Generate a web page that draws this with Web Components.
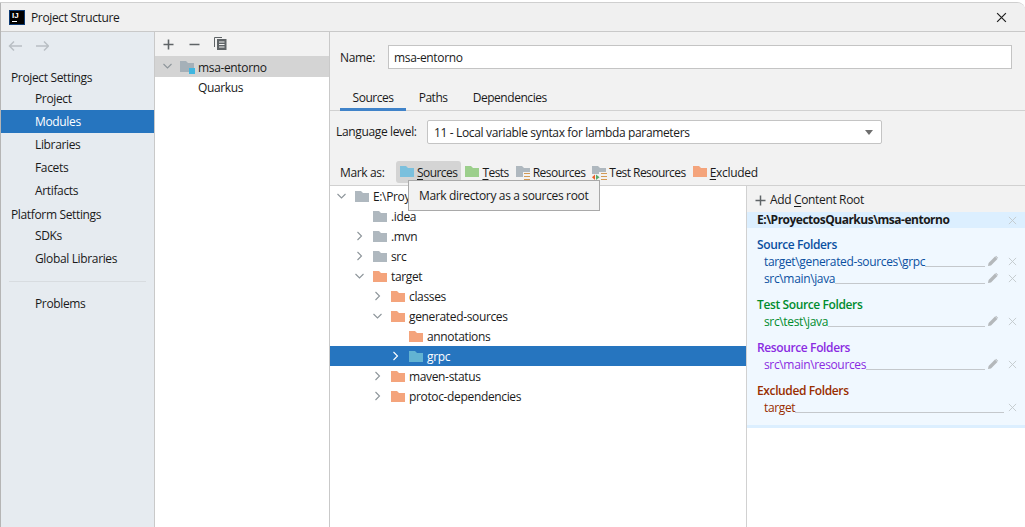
<!DOCTYPE html>
<html>
<head>
<meta charset="utf-8">
<title>Project Structure</title>
<style>
  html, body { margin: 0; height: 100%; background: #fff; overflow: hidden; }
  body { font: 12px/16px "Open Sans", "Noto Sans", sans-serif; color: #1a1a1a; letter-spacing: -.35px; }
</style>
</head>
<body>
<project-window>
  <window-titlebar slot="title">Project Structure</window-titlebar>
  <settings-nav slot="nav"></settings-nav>
  <module-list slot="modules"></module-list>
  <module-editor slot="editor">
    <folder-tree slot="tree">
      <tree-row depth="0" arrow="down" color="#afb8bf">E:\Proy</tree-row>
      <tree-row depth="1" color="#afb8bf">.idea</tree-row>
      <tree-row depth="1" arrow="right" color="#afb8bf">.mvn</tree-row>
      <tree-row depth="1" arrow="right" color="#afb8bf">src</tree-row>
      <tree-row depth="1" arrow="down" color="#f4a47c">target</tree-row>
      <tree-row depth="2" arrow="right" color="#f4a47c">classes</tree-row>
      <tree-row depth="2" arrow="down" color="#f4a47c">generated-sources</tree-row>
      <tree-row depth="3" color="#f4a47c">annotations</tree-row>
      <tree-row depth="3" arrow="right" color="#62b3d2" selected>grpc</tree-row>
      <tree-row depth="2" arrow="right" color="#f4a47c">maven-status</tree-row>
      <tree-row depth="2" arrow="right" color="#f4a47c">protoc-dependencies</tree-row>
    </folder-tree>
    <content-roots slot="roots">
      <root-group label="Source Folders" color="#0a50a1">
        <root-entry editable>target\generated-sources\grpc</root-entry>
        <root-entry editable>src\main\java</root-entry>
      </root-group>
      <root-group label="Test Source Folders" color="#008c2e">
        <root-entry editable>src\test\java</root-entry>
      </root-group>
      <root-group label="Resource Folders" color="#8a2be2">
        <root-entry editable>src\main\resources</root-entry>
      </root-group>
      <root-group label="Excluded Folders" color="#992e00">
        <root-entry>target</root-entry>
      </root-group>
    </content-roots>
  </module-editor>
</project-window>

<script>
  const xIcon = (size, color, width) => `
    <svg width="${size}" height="${size}" viewBox="0 0 10 10" style="display:block;flex:none">
      <path d="M1 1l8 8M9 1l-8 8" stroke="${color}" stroke-width="${width}" fill="none"/>
    </svg>`;

  const folderPath = 'M0 1h6l2 2h6v9H0z';

  class ProjectWindow extends HTMLElement {
    connectedCallback () {
      this.attachShadow({mode: 'open'}).innerHTML = `
        <style>
          :host {
            display: grid;
            grid-template-columns: 154px 175px 1fr;
            grid-template-rows: 29px 1fr;
            position: absolute;
            inset: 2px 0 0 0;
            box-sizing: border-box;
            border-left: 1px solid #b5b5b5;
            border-top: 1px solid #cfcfcf;
            border-top-right-radius: 8px;
            background: #f2f2f2;
            overflow: hidden;
          }
          ::slotted([slot=title]) { grid-column: 1 / 4; }
        </style>
        <slot name="title"></slot>
        <slot name="nav"></slot>
        <slot name="modules"></slot>
        <slot name="editor"></slot>
      `;
    }
  }

  class WindowTitlebar extends HTMLElement {
    connectedCallback () {
      this.attachShadow({mode: 'open'}).innerHTML = `
        <style>
          :host {
            display: flex;
            align-items: center;
            background: #f0f0f0;
            border-bottom: 1px solid #c9c9c9;
            padding: 0 18px 0 8px;
          }
          .logo {
            width: 16px; height: 15px;
            margin: 1px 6px 0 0;
            background: #000;
            color: #fff;
            box-sizing: border-box;
            padding: 2px 0 0 3px;
            font: bold 8px/8px "Liberation Sans", sans-serif;
            letter-spacing: 0;
            position: relative;
            outline: 1px solid #0d3a73;
            outline-offset: -1px;
          }
          .logo i { position: absolute; left: 3px; bottom: 3px; width: 5px; height: 1px; background: #fff; }
          .title { flex: 1; padding-top: 2px; }
          .close { margin-top: 1px; }
        </style>
        <div class="logo">IJ<i></i></div>
        <div class="title"><slot></slot></div>
        <div class="close">${xIcon(11, '#222', 1.1)}</div>
      `;
    }
  }

  class SettingsNav extends HTMLElement {
    connectedCallback () {
      const item = (label, on) => `<div class="item ${on ? 'on' : ''}">${label}</div>`;
      this.attachShadow({mode: 'open'}).innerHTML = `
        <style>
          :host {
            display: block;
            background: #e6ebf0;
            border-right: 1px solid #c9c9c9;
            box-sizing: border-box;
            width: 154px;
          }
          .arrows { display: flex; gap: 13px; padding: 8px 0 0 7px; height: 26px; box-sizing: border-box; }
          .head { height: 18px; line-height: 18px; padding-left: 10px; font-weight: 500; }
          .head.first { margin-top: 11px; }
          .head.next { margin-top: 4px; }
          .item { height: 23px; line-height: 23px; padding-left: 34px; }
          .item.on { background: #2675bf; color: #fff; }
          hr { border: 0; border-top: 1px solid #d8dce0; margin: 11px 8px 10px; }
        </style>
        <div class="arrows">
          <svg width="14" height="12" viewBox="0 0 14 12"><path d="M14 6H1.500M6 1.500L1.500 6 6 10.500" stroke="#b9bfc4" stroke-width="1.500" fill="none"/></svg>
          <svg width="14" height="12" viewBox="0 0 14 12"><path d="M1 6h12.500M9 1.500L13.500 6 9 10.500" stroke="#b9bfc4" stroke-width="1.500" fill="none"/></svg>
        </div>
        <div class="head first">Project Settings</div>
        ${item('Project')}${item('Modules', true)}${item('Libraries')}${item('Facets')}${item('Artifacts')}
        <div class="head next">Platform Settings</div>
        ${item('SDKs')}${item('Global Libraries')}
        <hr>
        ${item('Problems')}
      `;
    }
  }

  class ModuleList extends HTMLElement {
    connectedCallback () {
      this.attachShadow({mode: 'open'}).innerHTML = `
        <style>
          :host {
            display: block;
            background: #fff;
            border-right: 1px solid #c9c9c9;
          }
          .tools {
            display: flex; align-items: center; gap: 13px;
            height: 24px; padding-left: 7px;
            background: #f2f2f2;
          }
          .row { display: flex; align-items: center; box-sizing: border-box; }
          .sel { background: #d4d4d4; height: 21px; padding-top: 3px; }
          .sel svg { flex: none; }
          .child { padding: 2px 0 0 43px; height: 20px; }
        </style>
        <div class="tools">
          <svg width="13" height="13" viewBox="0 0 13 13"><path d="M1.5 6.5h10M6.5 1.5v10" stroke="#5f6467" stroke-width="1.6"/></svg>
          <svg width="13" height="13" viewBox="0 0 13 13"><path d="M1.5 6.5h10" stroke="#5f6467" stroke-width="1.6"/></svg>
          <svg width="13" height="14" viewBox="0 0 13 14"><path d="M.5 10V.5H8" stroke="#5f6467" fill="none"/><path d="M3 2h9.500v11H3z" fill="#5f6467"/><path d="M5 5h5.500M5 7.500h5.500M5 10h5.500" stroke="#f2f2f2"/></svg>
        </div>
        <div class="row sel">
          <svg width="12" height="12" viewBox="0 0 12 12" style="margin:-4px 6px 0 7px"><path d="M1.500 4l4 4 4-4" stroke="#8d959a" stroke-width="1.100" fill="none"/></svg>
          <svg width="15" height="14" viewBox="0 0 15 14" style="margin:-2px 3px 0 0"><path d="${folderPath}" fill="#a5b0b8"/><path d="M9 8h6v6H9z" fill="#40b6e0"/></svg>
          <span>msa-entorno</span>
        </div>
        <div class="row child">Quarkus</div>
      `;
    }
  }

  class ModuleEditor extends HTMLElement {
    connectedCallback () {
      const mark = (label, key, icon, cls = '') => `
        <div class="mark ${cls}">${icon}<span>${key ? label.replace(key, `<u>${key}</u>`) : label}</span></div>`;
      const folder = (color) => `<svg width="14" height="14" viewBox="0 0 14 14"><path d="${folderPath}" fill="${color}"/></svg>`;
      const resFolder = `<svg width="14" height="14" viewBox="0 0 14 14" style="overflow:visible"><path d="${folderPath}" fill="#afb8bf"/><path d="M7 7h7v8H7z" fill="#f2f2f2"/><path d="M8 8.500h6M8 11.500h6M8 14.500h6" stroke="#d39a55"/></svg>`;
      const testFolder = `<svg width="15" height="14" viewBox="0 0 15 14" style="overflow:visible"><path d="${folderPath}" fill="#afb8bf"/><path d="M0 9h15v6H0zM7 7h8v2H7z" fill="#f2f2f2"/><path d="M9 8.500h6M9 11.500h6M9 14.500h6" stroke="#d39a55"/><path d="M3 9.500v5.500L0 12.250z" fill="#e8622a"/><path d="M4 9.500v5.500l3.500-2.750z" fill="#59a869"/></svg>`;
      this.attachShadow({mode: 'open'}).innerHTML = `
        <style>
          :host {
            display: flex;
            flex-direction: column;
            position: relative;
            background: #f2f2f2;
            min-width: 0;
          }
          .name { display: flex; align-items: center; padding: 13px 13px 0 10px; height: 24px; }
          .name label { width: 48px; padding-top: 2px; }
          .field {
            flex: 1; height: 22px; line-height: 24px;
            background: #fff; border: 1px solid #c4c4c4; padding-left: 5px;
          }
          .tabs { display: flex; margin-top: 19px; height: 22px; border-bottom: 1px solid #d1d1d1; padding-left: 10px; letter-spacing: -.45px; }
          .tab { padding: 0 12.5px; line-height: 20px; height: 23px; }
          .tab.on { box-shadow: inset 0 -3px 0 #4083c9; }
          .level { display: flex; align-items: center; margin-top: 9px; padding-left: 6px; }
          .level label { width: 91px; }
          .combo {
            width: 447px; height: 22px;
            background: #fff; border: 1px solid #c4c4c4; border-radius: 2px; padding-left: 6px;
            display: flex; align-items: center; justify-content: space-between;
          }
          .combo span { padding-top: 2px; }
          .combo i { border: 4px solid transparent; border-top: 5px solid #6e6e6e; border-bottom: 0; margin-right: 8px; }
          .bar { display: flex; align-items: flex-start; margin-top: 16px; height: 24px; padding: 1px 0 0 10px; border-bottom: 1px solid #d1d1d1; }
          .bar label { width: 56px; line-height: 24px; }
          .mark { display: flex; align-items: center; gap: 3px; height: 22px; padding: 0 3px 0 4px; border-radius: 3px; letter-spacing: -.55px; }
          .mark span { padding-top: 2px; }
          .mark.on { background: #d4d4d4; padding-right: 4px; }
          .mark.wide { letter-spacing: -.3px; }
          .mark.tight svg { margin-right: -1px; }
          .mark svg { flex: none; }
          .panes { flex: 1; display: flex; min-height: 0; background: #fff; }
          .tip {
            position: absolute; left: 78px; top: 148px;
            padding: 7px 10px 6px; height: 16px; width: 170px;
            background: #f2f2f2; border: 1px solid #a9a9a9;
            white-space: nowrap;
          }
          u { text-underline-offset: 2px; }
        </style>
        <div class="name"><label>Name:</label><div class="field">msa-entorno</div></div>
        <div class="tabs">
          <div class="tab on">Sources</div><div class="tab">Paths</div><div class="tab">Dependencies</div>
        </div>
        <div class="level">
          <label>Language level:</label>
          <div class="combo"><span>11 - Local variable syntax for lambda parameters</span><i></i></div>
        </div>
        <div class="bar">
          <label>Mark as:</label>
          ${mark('Sources', 'S', folder('#7bc0dd'), 'on')}
          ${mark('Tests', 'T', folder('#9ccf8c'))}
          ${mark('Resources', '', resFolder)}
          ${mark('Test Resources', '', testFolder, 'tight')}
          ${mark('Excluded', 'E', folder('#f4a47c'), 'wide')}
        </div>
        <div class="panes">
          <slot name="tree"></slot>
          <slot name="roots"></slot>
        </div>
        <div class="tip">Mark directory as a sources root</div>
      `;
    }
  }

  class FolderTree extends HTMLElement {
    connectedCallback () {
      this.attachShadow({mode: 'open'}).innerHTML = `
        <style>
          :host { display: block; width: 416px; flex: none; background: #fff; border-right: 1px solid #d1d1d1; overflow: hidden; }
        </style>
        <slot></slot>
      `;
    }
  }

  class TreeRow extends HTMLElement {
    connectedCallback () {
      const depth = Number(this.getAttribute('depth'));
      const arrow = this.getAttribute('arrow');
      const selected = this.hasAttribute('selected');
      const stroke = selected ? '#fff' : '#8d959a';
      const shape = arrow === 'down' ? 'M1.500 4l4 4 4-4' : 'M3.500 2l4 4-4 4';
      this.attachShadow({mode: 'open'}).innerHTML = `
        <style>
          :host {
            display: flex; align-items: center; height: 20px;
            box-sizing: border-box;
            padding: 2px 0 0 ${6 + depth * 18}px;
            white-space: nowrap;
            ${selected ? 'background: #2675bf; color: #fff;' : ''}
          }
          svg { flex: none; display: block; }
          .arrow { margin: -2px 7px 0 0; }
          .folder { margin: -2px 4px 0 0; }
        </style>
        <svg class="arrow" width="12" height="12" viewBox="0 0 12 12">${arrow ? `<path d="${shape}" stroke="${stroke}" stroke-width="1.100" fill="none"/>` : ''}</svg>
        <svg class="folder" width="14" height="12" viewBox="0 0 14 12"><path d="${folderPath}" fill="${this.getAttribute('color')}"/></svg>
        <span><slot></slot></span>
      `;
    }
  }

  class ContentRoots extends HTMLElement {
    connectedCallback () {
      this.attachShadow({mode: 'open'}).innerHTML = `
        <style>
          :host { display: block; flex: 1; min-width: 0; background: #fff; }
          .add {
            display: flex; align-items: center; gap: 4px;
            height: 26px; box-sizing: border-box; padding: 3px 0 0 8px; background: #f2f2f2;
          }
          .add span { margin-top: -1px; }
          .head {
            display: flex; align-items: center; justify-content: space-between;
            height: 16px; padding: 0 8px 0 10px;
            background: #dcefff; font-weight: 700; letter-spacing: -.5px;
          }
          .head svg { margin-top: 1px; }
          .body { background: #f0f8ff; height: 197px; border-bottom: 3px solid #dcefff; }
          u { text-underline-offset: 2px; }
        </style>
        <div class="add">
          <svg width="11" height="11" viewBox="0 0 11 11"><path d="M.5 5.500h10M5.500.5v10" stroke="#5f6467" stroke-width="1.500"/></svg>
          <span>Add <u>C</u>ontent Root</span>
        </div>
        <div class="head"><span>E:\\ProyectosQuarkus\\msa-entorno</span>${xIcon(9, '#c2c8cc', 1)}</div>
        <div class="body"><slot></slot></div>
      `;
    }
  }

  class RootGroup extends HTMLElement {
    connectedCallback () {
      this.attachShadow({mode: 'open'}).innerHTML = `
        <style>
          :host { display: block; color: ${this.getAttribute('color')}; padding: 9px 0 0 10px; }
          .label { font-weight: 600; line-height: 16px; margin-bottom: 1px; letter-spacing: -.38px; }
        </style>
        <div class="label">${this.getAttribute('label')}</div>
        <slot></slot>
      `;
    }
  }

  class RootEntry extends HTMLElement {
    connectedCallback () {
      const editable = this.hasAttribute('editable');
      this.attachShadow({mode: 'open'}).innerHTML = `
        <style>
          :host { display: flex; align-items: flex-start; height: 17px; padding-left: 7px; }
          .text { flex: none; }
          .line { flex: 1; border-bottom: 1px solid #c4c8cc; height: 12px; }
          .pencil { margin: 1px 4px 0 2px; flex: none; }
          .x { margin: 3px 8px 0 ${editable ? 5 : 4}px; }
        </style>
        <span class="text"><slot></slot></span>
        <span class="line"></span>
        ${editable ? `<svg class="pencil" width="12" height="12" viewBox="0 0 12 12"><path d="M1 11l.6-3L8 1.600 10.400 4 4 10.400z" fill="#b4b8bb"/><path d="M9 .8l2.200 2.200-.6.6L8.400 1.400z" fill="#b4b8bb"/></svg>` : ''}
        <span class="x">${xIcon(9, '#c2c8cc', 1)}</span>
      `;
    }
  }

  window.customElements.define('project-window', ProjectWindow);
  window.customElements.define('window-titlebar', WindowTitlebar);
  window.customElements.define('settings-nav', SettingsNav);
  window.customElements.define('module-list', ModuleList);
  window.customElements.define('module-editor', ModuleEditor);
  window.customElements.define('folder-tree', FolderTree);
  window.customElements.define('tree-row', TreeRow);
  window.customElements.define('content-roots', ContentRoots);
  window.customElements.define('root-group', RootGroup);
  window.customElements.define('root-entry', RootEntry);
</script>
</body>
</html>
